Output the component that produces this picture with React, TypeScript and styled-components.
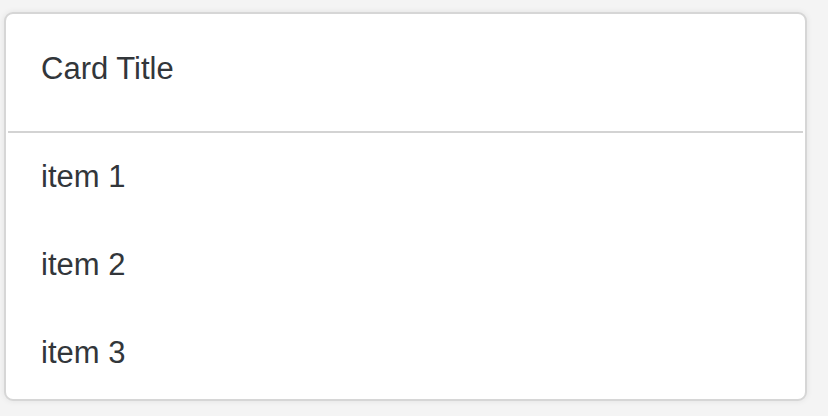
import React from 'react';
import styled, { createGlobalStyle } from 'styled-components';

const GlobalStyle = createGlobalStyle`
  html, body {
    margin: 0;
    padding: 0;
    background: #f4f4f4;
  }
  body {
    font-family: "Liberation Sans", Arial, sans-serif;
    color: #32363a;
  }
`;

const Page = styled.div`
  padding: 12px 21px 15px 4px;
`;

const Card = styled.div`
  background: #ffffff;
  border: 2px solid #d6d6d6;
  border-radius: 9px;
  box-shadow: 0 0 6px rgba(0, 0, 0, 0.08);
  overflow: hidden;
`;

const Header = styled.div`
  display: flex;
  align-items: center;
  height: 119px;
  padding: 0 33px 7px;
  box-sizing: border-box;
  margin: 0 2px;
  border-bottom: 2px solid #d3d3d3;
`;

const Title = styled.div`
  font-size: 31px;
  color: #32363a;
`;

const List = styled.ul`
  list-style: none;
  margin: 0;
  padding: 0 0 2px;
`;

const Item = styled.li`
  display: flex;
  align-items: center;
  height: 88px;
  padding: 0 35px;
  box-sizing: border-box;
  font-size: 31px;
  color: #32363a;
`;

const items = ['item 1', 'item 2', 'item 3'];

export default function App() {
  return (
    <>
      <GlobalStyle />
      <Page>
        <Card>
          <Header>
            <Title>Card Title</Title>
          </Header>
          <List>
            {items.map((label) => (
              <Item key={label}>{label}</Item>
            ))}
          </List>
        </Card>
      </Page>
    </>
  );
}
